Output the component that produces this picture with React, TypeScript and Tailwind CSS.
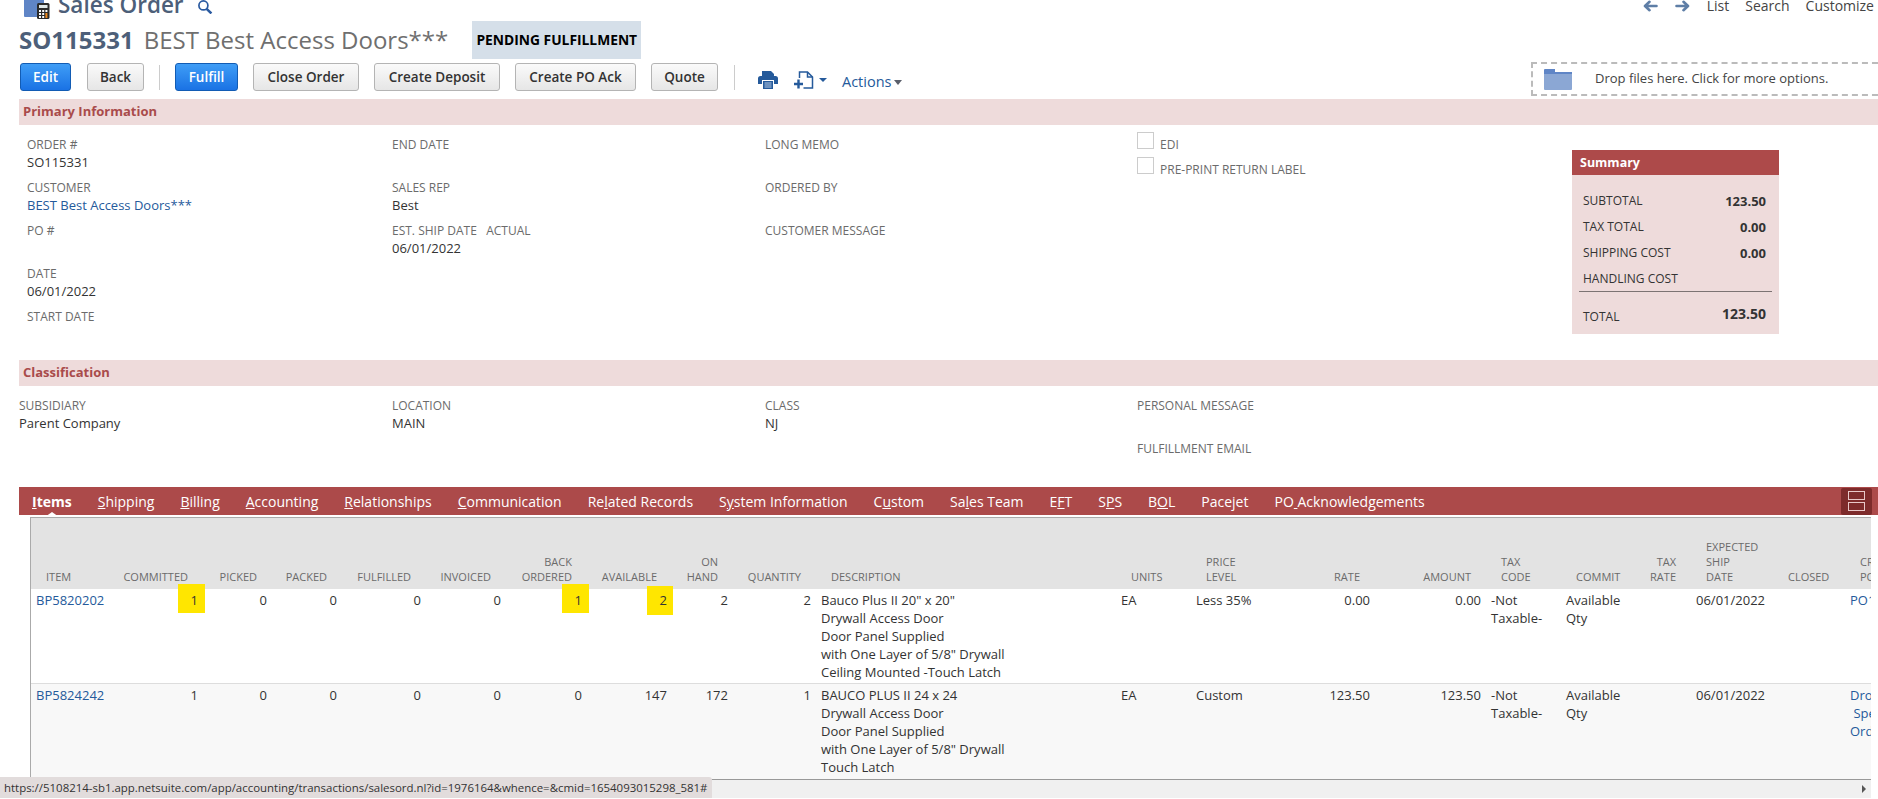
import React from "react";

const buttons = [
  { label: "Fulfill", w: "w-[63px]", primary: true },
  { label: "Close Order", w: "w-[106px]" },
  { label: "Create Deposit", w: "w-[126px]" },
  { label: "Create PO Ack", w: "w-[121px]" },
  { label: "Quote", w: "w-[67px]" },
];

const tabs: [string, string, string][] = [
  ["", "I", "tems"],
  ["", "S", "hipping"],
  ["", "B", "illing"],
  ["", "A", "ccounting"],
  ["", "R", "elationships"],
  ["", "C", "ommunication"],
  ["Re", "l", "ated Records"],
  ["S", "y", "stem Information"],
  ["C", "u", "stom"],
  ["Sa", "l", "es Team"],
  ["E", "F", "T"],
  ["S", "P", "S"],
  ["B", "O", "L"],
  ["Pacejet", "", ""],
  ["PO", " ", "Acknowledgements"],
];

const cols = "grid grid-cols-[79px_93px_69px_70px_84px_80px_81px_85px_61px_83px_300px_75px_109px_75px_111px_75px_79px_51px_84px_70px_60px]";

const headers: [string, "l" | "r"][] = [
  ["ITEM", "l"],
  ["COMMITTED", "r"],
  ["PICKED", "r"],
  ["PACKED", "r"],
  ["FULFILLED", "r"],
  ["INVOICED", "r"],
  ["BACK\nORDERED", "r"],
  ["AVAILABLE", "r"],
  ["ON\nHAND", "r"],
  ["QUANTITY", "r"],
  ["DESCRIPTION", "l"],
  ["UNITS", "l"],
  ["PRICE\nLEVEL", "l"],
  ["RATE", "r"],
  ["AMOUNT", "r"],
  ["TAX\nCODE", "l"],
  ["COMMIT", "l"],
  ["TAX\nRATE", "r"],
  ["EXPECTED\nSHIP\nDATE", "l"],
  ["CLOSED", "l"],
  ["CREATE\nPO", "l"],
];

const Field = ({ label, value, link }: { label: string; value?: string; link?: boolean }) => (
  <div className="h-[43px]">
    <div className="h-[18px] pt-px leading-[18px] text-[12px] text-[#6b6b6b] whitespace-pre">{label}</div>
    <div className={`h-[18px] leading-[18px] ${link ? "text-[#255a9b]" : "text-[#333]"}`}>{value}</div>
  </div>
);

const SectionBar = ({ title }: { title: string }) => (
  <div className="ml-[19px] h-[26px] pl-[4px] flex items-center bg-[#eedbdb] text-[13px] font-bold text-[#a94b4b]">{title}</div>
);

const Num = ({ v, mark }: { v: string; mark?: "high" | "low" }) => (
  <div className="relative text-right px-[5px]">
    {mark === "high" && <div className="absolute -top-[7px] right-[-2px] w-[27px] h-[29px] bg-[#ffe600]" />}
    {mark === "low" && <div className="absolute -top-[5px] right-[-1px] w-[26px] h-[29px] bg-[#ffe600]" />}
    <span className="relative">{v}</span>
  </div>
);

const Txt = ({ children, link }: { children?: React.ReactNode; link?: boolean }) => (
  <div className={`px-[5px] whitespace-pre-line ${link ? "text-[#255a9b]" : ""}`}>{children}</div>
);

const Row = ({ vals, desc, marks, extra }: { vals: string[]; desc: string; marks: Record<number, "high" | "low">; extra: string[] }) => (
  <div className={`${cols} pt-[2px] leading-[18px] text-[#333]`}>
    <Txt link>{vals[0]}</Txt>
    {vals.slice(1).map((v, i) => (
      <Num key={i} v={v} mark={marks[i]} />
    ))}
    <Txt>{desc}</Txt>
    <Txt>EA</Txt>
    <Txt>{extra[0]}</Txt>
    <Num v={extra[1]} />
    <Num v={extra[2]} />
    <Txt>{"-Not\nTaxable-"}</Txt>
    <Txt>{"Available\nQty"}</Txt>
    <Txt />
    <Txt>06/01/2022</Txt>
    <Txt />
    <Txt link>{extra[3]}</Txt>
  </div>
);

const Btn = ({ label, w, primary }: { label: string; w: string; primary?: boolean }) => (
  <button
    className={`${w} h-[28px] rounded-[3px] border text-[13.5px] font-semibold ${
      primary
        ? "border-[#125cb4] bg-gradient-to-b from-[#3f9df6] to-[#1a72e4] text-white"
        : "border-[#b4b4b4] bg-gradient-to-b from-[#fafafa] to-[#e6e6e6] text-[#333]"
    }`}
  >
    {label}
  </button>
);

export default function App() {
  return (
    <div className="relative w-[1878px] h-[799px] overflow-hidden bg-white font-['Open_Sans',sans-serif] text-[13px] text-[#333]">
      {/* page title + nav */}
      <div className="h-[21px] flex items-start">
        <svg className="ml-[24px] w-[26px] h-[19px] shrink-0" viewBox="0 0 26 19">
          <rect x="0" y="-3" width="20" height="20" rx="1" fill="#5f85c6" />
          <rect x="13" y="3" width="12.5" height="16" rx="1.5" fill="#2b2b2b" />
          <rect x="15" y="5" width="8.5" height="3" fill="#dfe7e7" />
          <path d="M15 10h2v2h-2zM18.2 10h2v2h-2zM21.4 10h2v2h-2zM15 13h2v2h-2zM18.2 13h2v2h-2zM15 16h2v2h-2zM18.2 16h2v2h-2z" fill="#fff" />
          <rect x="21.4" y="13" width="2" height="5" fill="#f08a1d" />
        </svg>
        <div className="ml-[8px] h-[10px] flex items-center text-[22.5px] font-semibold text-[#4d5f79]">Sales Order</div>
        <svg className="ml-[13px] w-[16px] h-[14px] shrink-0" viewBox="0 0 15 13" fill="none" stroke="#2a5aa0">
          <circle cx="6" cy="5" r="4.2" strokeWidth="1.6" />
          <path d="M9 8.3l4.5 4.2" strokeWidth="2.4" />
        </svg>
        <div className="ml-auto flex items-center h-[12px] text-[14px] leading-none text-[#444]">
          <svg className="w-[15px] h-[12px]" viewBox="0 0 15 12" fill="none" stroke="#5e7ea6" strokeWidth="2.6" strokeLinecap="round" strokeLinejoin="round">
            <path d="M13.5 6H3M6.5 1.8L2 6l4.5 4.2" />
          </svg>
          <svg className="ml-[17px] w-[15px] h-[12px]" viewBox="0 0 15 12" fill="none" stroke="#5e7ea6" strokeWidth="2.6" strokeLinecap="round" strokeLinejoin="round">
            <path d="M1.5 6H12M8.5 1.8L13 6l-4.5 4.2" />
          </svg>
          <span className="ml-[17px]">List</span>
          <span className="ml-[16px]">Search</span>
          <span className="ml-[16px] mr-[4px]">Customize</span>
        </div>
      </div>

      {/* record title */}
      <div className="h-[38px] pl-[19px] flex items-center">
        <span className="text-[24px] font-bold text-[#4d5f79]">SO115331</span>
        <span className="ml-[10px] text-[24px] text-[#6f6f6f]">BEST Best Access Doors***</span>
        <div className="ml-[24px] w-[169px] h-[38px] flex items-center justify-center bg-[#d5dfe9] text-[13.8px] font-bold text-black">PENDING FULFILLMENT</div>
      </div>

      {/* toolbar */}
      <div className="h-[40px] pl-[20px] pt-[4px] flex items-start">
        <Btn label="Edit" w="w-[51px]" primary />
        <div className="ml-[16px]"><Btn label="Back" w="w-[57px]" /></div>
        <div className="mx-[15px] mt-[2px] w-px h-[25px] bg-[#ccc]" />
        <div className="flex gap-[15px]">
          {buttons.map((b) => (
            <Btn key={b.label} {...b} />
          ))}
        </div>
        <div className="ml-[16px] mt-[2px] w-px h-[25px] bg-[#ccc]" />
        <svg className="ml-[23px] mt-[8px] w-[20px] h-[18px] shrink-0" viewBox="0 0 20 18" fill="#255a9b">
          <path d="M4 0h9l3 3v4H4z" />
          <path d="M2.5 5h15A2.5 2.5 0 0 1 20 7.5V13h-4V9H4v4H0V7.5A2.5 2.5 0 0 1 2.5 5z" />
          <path d="M5 10h10v8H5z" />
          <path d="M6.5 12h7M6.5 14h7M6.5 16h7" stroke="#b9cbe4" strokeWidth="1" />
        </svg>
        <svg className="ml-[15px] mt-[8px] w-[21px] h-[18px] shrink-0" viewBox="0 0 20 18" fill="none" stroke="#255a9b" strokeWidth="1.5">
          <path d="M6 7V1h8l5 5v11H10" />
          <path d="M14 1v5h5" />
          <path d="M5 8.5v9M0.5 13h9" strokeWidth="2.4" />
        </svg>
        <div className="ml-[5px] mt-[15px] w-0 h-0 border-x-[4px] border-x-transparent border-t-[4px] border-t-[#255a9b]" />
        <span className="ml-[15px] mt-[8px] text-[14.5px] leading-[22px] text-[#255a9b]">Actions</span>
        <div className="ml-[3px] mt-[17px] w-0 h-0 border-x-[4px] border-x-transparent border-t-[5px] border-t-[#5a5f6b]" />
        <div className="ml-auto -mr-[10px] mt-[-1px] w-[357px] h-[34px] shrink-0 flex items-center pl-[11px] border-2 border-dashed border-[#bbb]">
          <svg className="w-[28px] h-[21px] shrink-0" viewBox="0 0 28 21">
            <path d="M0 1a1 1 0 0 1 1-1h10v3h17v5H0z" fill="#5f85c6" />
            <path d="M0 5h28v15a1 1 0 0 1-1 1H1a1 1 0 0 1-1-1z" fill="#8ba7d4" />
          </svg>
          <span className="ml-[23px] text-[13px] text-[#444]">Drop files here. Click for more options.</span>
        </div>
      </div>

      <SectionBar title="Primary Information" />

      <div className="h-[235px] pt-[10px] pl-[27px] grid grid-cols-[365px_373px_372px_435px_207px]">
        <div>
          <Field label="ORDER #" value="SO115331" />
          <Field label="CUSTOMER" value="BEST Best Access Doors***" link />
          <Field label="PO #" />
          <Field label="DATE" value="06/01/2022" />
          <Field label="START DATE" />
        </div>
        <div>
          <Field label="END DATE" />
          <Field label="SALES REP" value="Best" />
          <Field label="EST. SHIP DATE   ACTUAL" value="06/01/2022" />
        </div>
        <div>
          <Field label="LONG MEMO" />
          <Field label="ORDERED BY" />
          <Field label="CUSTOMER MESSAGE" />
        </div>
        <div className="-mt-[3px] flex flex-col gap-[8px] text-[12px] text-[#6b6b6b]">
          <div className="flex items-end gap-[6px] leading-[16px]">
            <div className="w-[17px] h-[17px] border border-[#ccc] bg-white" />
            <span className="-mb-[4px]">EDI</span>
          </div>
          <div className="flex items-end gap-[6px] leading-[16px]">
            <div className="w-[17px] h-[17px] border border-[#ccc] bg-white" />
            <span className="-mb-[4px]">PRE-PRINT RETURN LABEL</span>
          </div>
        </div>
        <div className="mt-[15px] h-[184px] bg-[#eedbdb] text-[12px] text-[#333]">
          <div className="h-[25px] pl-[8px] pt-px flex items-center bg-[#ad4a4a] text-[12.5px] font-bold text-white">Summary</div>
          <div className="pt-[13px]">
            {[
              ["SUBTOTAL", "123.50"],
              ["TAX TOTAL", "0.00"],
              ["SHIPPING COST", "0.00"],
              ["HANDLING COST", ""],
            ].map(([k, v]) => (
              <div key={k} className="h-[26px] px-[11px] pr-[13px] flex items-center justify-between">
                <span>{k}</span>
                <span className="text-[13px] font-bold pt-px">{v}</span>
              </div>
            ))}
            <div className="mx-[7px] -mt-[1px] h-px bg-[#7c7373]" />
            <div className="pt-[16px] px-[11px] pr-[13px] flex items-start justify-between leading-[18px]">
              <span>TOTAL</span>
              <span className="-mt-[3px] text-[14px] font-bold">123.50</span>
            </div>
          </div>
        </div>
      </div>

      <SectionBar title="Classification" />

      <div className="h-[101px] pt-[10px] pl-[19px] grid grid-cols-[373px_373px_372px_1fr]">
        <Field label="SUBSIDIARY" value="Parent Company" />
        <Field label="LOCATION" value="MAIN" />
        <Field label="CLASS" value="NJ" />
        <div>
          <Field label="PERSONAL MESSAGE" />
          <Field label="FULFILLMENT EMAIL" />
        </div>
      </div>

      {/* subtabs */}
      <div className="ml-[19px] h-[28px] pl-[13px] flex items-center gap-[26px] bg-[#ac4a4a] text-[14px] text-white">
        {tabs.map(([a, u, b], i) => (
          <span key={i} className={`relative whitespace-pre ${i === 0 ? "font-bold" : ""}`}>
            {a}
            <u>{u}</u>
            {b}
            {i === 0 && (
              <span className="absolute left-[13px] bottom-[-5px] w-0 h-0 border-x-[7px] border-x-transparent border-b-[5px] border-b-white" />
            )}
          </span>
        ))}
        <div className="ml-auto mr-[6px] w-[31px] h-[27px] flex flex-col items-center justify-center gap-[2px] rounded-[2px] bg-[#7d2b2b]">
          <div className="w-[17px] h-[9px] border border-[#e8c8c8]" />
          <div className="w-[17px] h-[9px] border border-[#e8c8c8]" />
        </div>
      </div>

      {/* item sublist */}
      <div className="mt-[2px] ml-[30px] w-[1841px] h-[281px] overflow-hidden border-l border-t border-[#aaa] flex flex-col">
        <div className={`${cols} h-[71px] shrink-0 items-end pb-[5px] bg-[#e3e3e3] text-[11px] leading-[15px] text-[#6b6b6b]`}>
          {headers.map(([h, align]) => (
            <div key={h} className={`whitespace-pre-line ${align === "r" ? "text-right pr-[15px]" : h === "CLOSED" ? "pl-[13px]" : "pl-[15px]"}`}>
              {h}
            </div>
          ))}
        </div>
        <div className="h-[95px] shrink-0 border-b border-[#ddd]">
          <Row
            vals={["BP5820202", "1", "0", "0", "0", "0", "1", "2", "2", "2"]}
            marks={{ 0: "high", 5: "high", 6: "low" }}
            desc={'Bauco Plus II 20" x 20"\nDrywall Access Door\nDoor Panel Supplied\nwith One Layer of 5/8" Drywall\nCeiling Mounted -Touch Latch'}
            extra={["Less 35%", "0.00", "0.00", "PO115331"]}
          />
        </div>
        <div className="h-[95px] shrink-0 bg-[#f8f8f8]">
          <Row
            vals={["BP5824242", "1", "0", "0", "0", "0", "0", "147", "172", "1"]}
            marks={{}}
            desc={'BAUCO PLUS II 24 x 24\nDrywall Access Door\nDoor Panel Supplied\nwith One Layer of 5/8" Drywall\nTouch Latch'}
            extra={["Custom", "123.50", "123.50", "Drop\n\u00a0Special\nOrder"]}
          />
        </div>
        <div className="h-[19px] shrink-0 flex items-center justify-end pr-[5px] border-t border-[#999] bg-[#f0f0f0]">
          <div className="w-0 h-0 border-y-[4px] border-y-transparent border-l-[4px] border-l-[#555]" />
        </div>
      </div>

      {/* link preview over the page */}
      <div className="absolute left-0 bottom-[1px] h-[21px] px-[4px] flex items-center whitespace-nowrap rounded-tr-[3px] bg-[#e2dcdc] text-[11.45px] text-[#333]">
        https://5108214-sb1.app.netsuite.com/app/accounting/transactions/salesord.nl?id=1976164&whence=&cmid=1654093015298_581#
      </div>
    </div>
  );
}
